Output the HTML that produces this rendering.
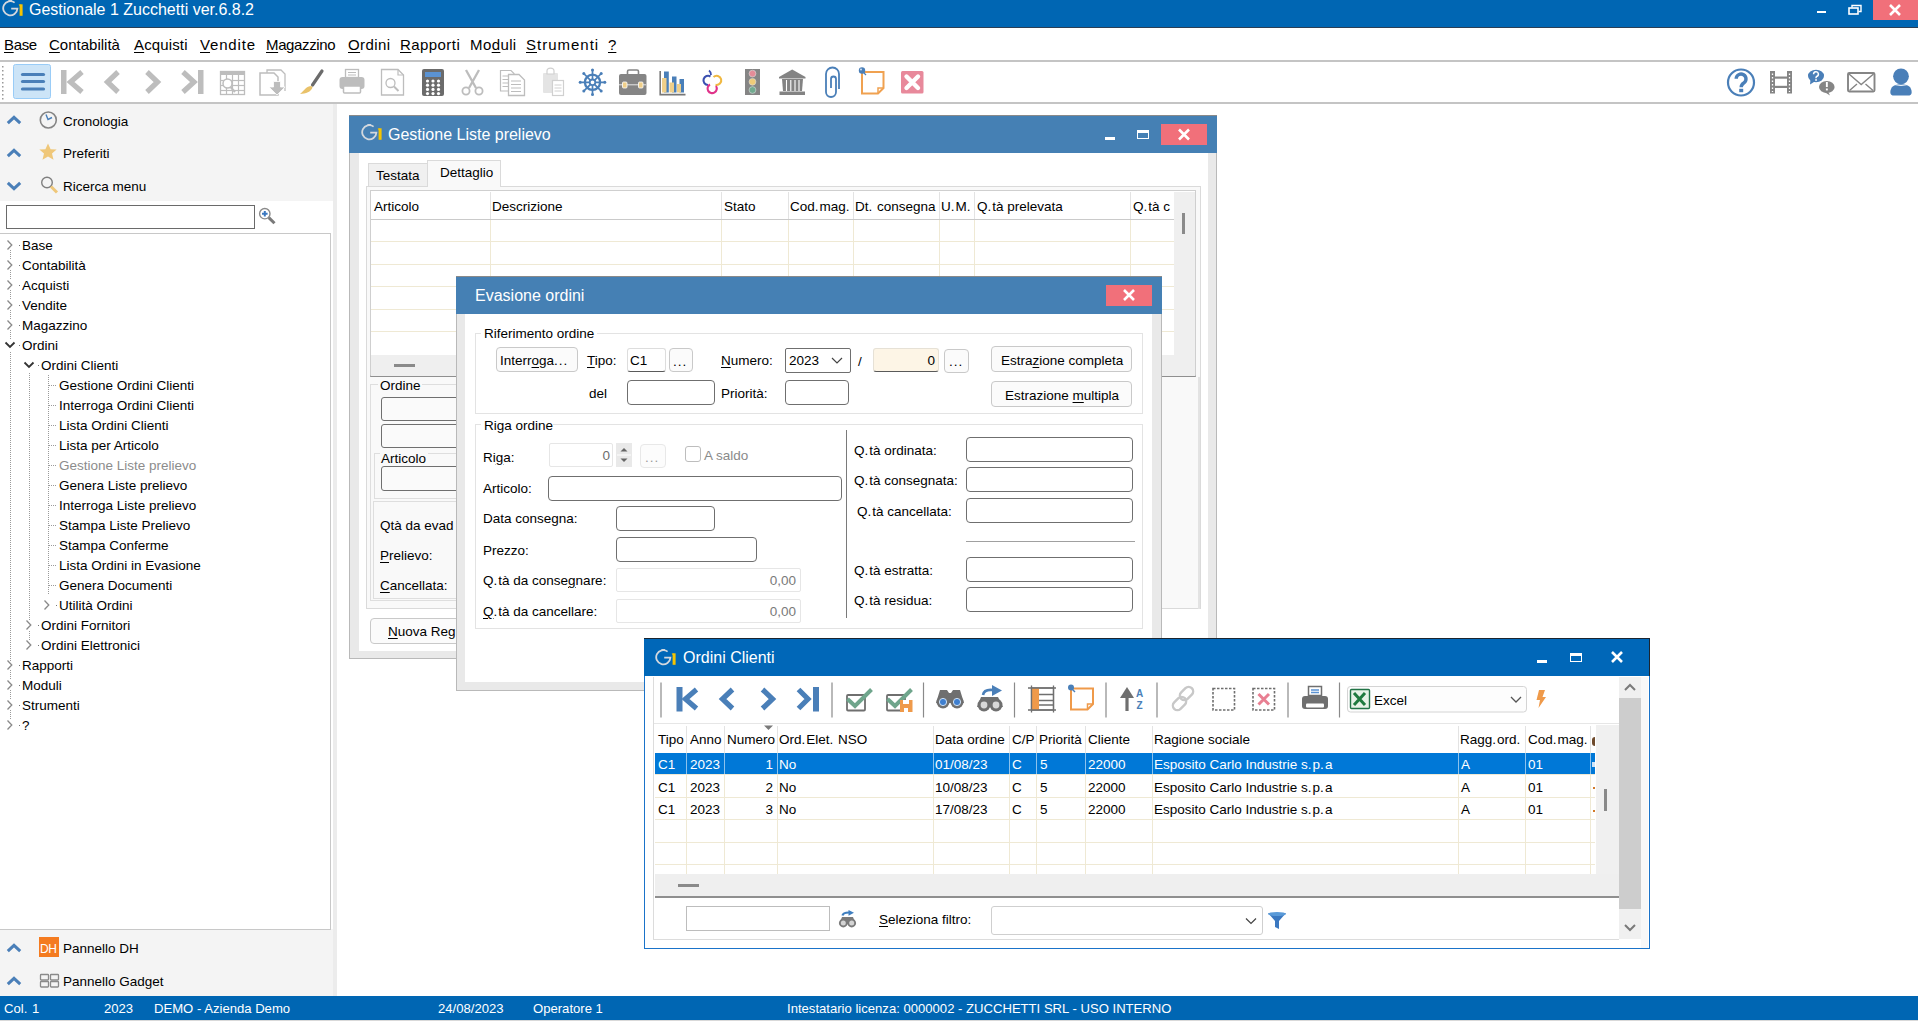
<!DOCTYPE html>
<html><head><meta charset="utf-8"><style>
html,body{margin:0;padding:0;width:1918px;height:1021px;overflow:hidden;background:#fff;}
body{position:relative;font-family:"Liberation Sans",sans-serif;}
body>div,body>svg{position:absolute;}
.t{position:absolute;white-space:nowrap;font-family:"Liberation Sans",sans-serif;}
u{text-decoration:underline;text-underline-offset:2px;text-decoration-thickness:1px;}
</style></head><body>
<div style="left:0px;top:0px;width:1918px;height:27px;background:#0066b3"></div>
<div style="left:0px;top:27px;width:1918px;height:1px;background:#2b3f55"></div>
<svg style="position:absolute;left:0px;top:0px" width="24" height="20" viewBox="0 0 24 20"><path d="M14.6 2.6 A7.1 7.1 0 1 0 17.4 8.7 L11.2 8.7" fill="none" stroke="#d3d8de" stroke-width="1.8"/><path d="M8.5 0.6H12" stroke="#d5dbe2" stroke-width="1"/><rect x="19.6" y="4.3" width="3" height="11.5" fill="#f5c400"/><path d="M18.6 4.8L20.5 4.3V6.6Z" fill="#f5c400"/></svg>
<div class="t" style="left:29px;top:2.0600000000000005px;font-size:16px;line-height:16px;color:#fff;">Gestionale 1 Zucchetti ver.6.8.2</div>
<div style="left:1817px;top:11px;width:9px;height:2px;background:#fff"></div>
<svg style="position:absolute;left:1848px;top:4px" width="16" height="12" viewBox="0 0 16 12"><rect x="1" y="4" width="9" height="6" fill="none" stroke="#fff" stroke-width="1.6"/><path d="M4 3.5V1.5h9v6h-2.5" fill="none" stroke="#fff" stroke-width="1.4"/></svg>
<div style="left:1873px;top:0px;width:45px;height:20px;background:#f1707a"></div>
<svg style="position:absolute;left:1884px;top:2px" width="22" height="16" viewBox="0 0 22 16"><path d="M6 3L16 13M16 3L6 13" stroke="#fff" stroke-width="2.6"/></svg>
<div class="t" style="left:4px;top:37.3px;font-size:15px;line-height:15px;color:#000;letter-spacing:-0.33px"><u>B</u>ase</div>
<div class="t" style="left:49px;top:37.3px;font-size:15px;line-height:15px;color:#000;letter-spacing:0px"><u>C</u>ontabilità</div>
<div class="t" style="left:134px;top:37.3px;font-size:15px;line-height:15px;color:#000;letter-spacing:0.14px"><u>A</u>cquisti</div>
<div class="t" style="left:200px;top:37.3px;font-size:15px;line-height:15px;color:#000;letter-spacing:0.83px"><u>V</u>endite</div>
<div class="t" style="left:266px;top:37.3px;font-size:15px;line-height:15px;color:#000;letter-spacing:-0.38px"><u>M</u>agazzino</div>
<div class="t" style="left:348px;top:37.3px;font-size:15px;line-height:15px;color:#000;letter-spacing:0.4px"><u>O</u>rdini</div>
<div class="t" style="left:400px;top:37.3px;font-size:15px;line-height:15px;color:#000;letter-spacing:0.43px"><u>R</u>apporti</div>
<div class="t" style="left:470px;top:37.3px;font-size:15px;line-height:15px;color:#000;letter-spacing:0.4px">Mo<u>d</u>uli</div>
<div class="t" style="left:526px;top:37.3px;font-size:15px;line-height:15px;color:#000;letter-spacing:1.0px"><u>S</u>trumenti</div>
<div class="t" style="left:608px;top:37.3px;font-size:15px;line-height:15px;color:#000;letter-spacing:0px"><u>?</u></div>
<div style="left:0px;top:60px;width:1918px;height:2px;background:#c4c4c4"></div>
<div style="left:0px;top:102px;width:1918px;height:2px;background:#c4c4c4"></div>
<div style="left:0px;top:996px;width:1918px;height:24px;background:#0066b3"></div>
<div style="left:0px;top:1020px;width:1918px;height:1px;background:#d9d9d9"></div>
<div class="t" style="left:4px;top:1001.91px;font-size:13.1px;line-height:13.1px;color:#fff;">Col<span style="letter-spacing:1px">.</span> 1</div>
<div class="t" style="left:104px;top:1001.91px;font-size:13.1px;line-height:13.1px;color:#fff;">2023</div>
<div class="t" style="left:154px;top:1001.91px;font-size:13.1px;line-height:13.1px;color:#fff;">DEMO - Azienda Demo</div>
<div class="t" style="left:438px;top:1001.91px;font-size:13.1px;line-height:13.1px;color:#fff;">24/08/2023</div>
<div class="t" style="left:533px;top:1001.91px;font-size:13.1px;line-height:13.1px;color:#fff;">Operatore 1</div>
<div class="t" style="left:787px;top:1001.91px;font-size:13.1px;line-height:13.1px;color:#fff;">Intestatario licenza: 0000002 - ZUCCHETTI SRL - USO INTERNO</div>
<div style="left:0px;top:104px;width:333px;height:97px;background:#f4f4f4"></div>
<div style="left:0px;top:929px;width:333px;height:67px;background:#f4f4f4"></div>
<div style="left:333px;top:104px;width:4px;height:892px;background:#ececec"></div>
<svg style="position:absolute;left:6px;top:115px" width="16" height="10" viewBox="0 0 16 10"><path d="M1.8 8.2L8 2.3L14.2 8.2" fill="none" stroke="#4a7fb8" stroke-width="3"/></svg>
<svg style="position:absolute;left:6px;top:148px" width="16" height="10" viewBox="0 0 16 10"><path d="M1.8 8.2L8 2.3L14.2 8.2" fill="none" stroke="#4a7fb8" stroke-width="3"/></svg>
<svg style="position:absolute;left:6px;top:181px" width="16" height="10" viewBox="0 0 16 10"><path d="M1.8 1.8L8 7.7L14.2 1.8" fill="none" stroke="#4a7fb8" stroke-width="3"/></svg>
<svg style="position:absolute;left:38px;top:110px" width="20" height="20" viewBox="0 0 20 20"><circle cx="10.3" cy="10" r="8" fill="none" stroke="#858585" stroke-width="1.6"/><path d="M8 4.5L10 9.5L14 7.5" fill="none" stroke="#4a7fb8" stroke-width="1.4"/></svg>
<svg style="position:absolute;left:38px;top:142px" width="20" height="20" viewBox="0 0 20 20"><path d="M10 1.5L12.6 7.2L18.6 7.6L14 11.6L15.5 17.8L10 14.5L4.5 17.8L6 11.6L1.4 7.6L7.4 7.2Z" fill="#efc779"/></svg>
<svg style="position:absolute;left:38px;top:175px" width="22" height="22" viewBox="0 0 22 22"><circle cx="9" cy="7.5" r="5.3" fill="none" stroke="#7f7f7f" stroke-width="1.4"/><path d="M13 11.5L19 17.5" stroke="#efc779" stroke-width="3"/></svg>
<div class="t" style="left:63px;top:114.57px;font-size:13.5px;line-height:13.5px;color:#000;">Cronologia</div>
<div class="t" style="left:63px;top:146.57px;font-size:13.5px;line-height:13.5px;color:#000;">Preferiti</div>
<div class="t" style="left:63px;top:179.57px;font-size:13.5px;line-height:13.5px;color:#000;">Ricerca menu</div>
<div style="left:6px;top:205px;width:249px;height:24px;background:#fff;border:1px solid #6a6a6a;box-sizing:border-box"></div>
<svg style="position:absolute;left:258px;top:206px" width="22" height="22" viewBox="0 0 22 22"><circle cx="6.8" cy="7.7" r="5.2" fill="#fff" stroke="#8a8a8a" stroke-width="1.4"/><path d="M4 7.7h5.6M6.8 4.9v5.6" stroke="#3b78c0" stroke-width="2"/><path d="M10.8 11.6L16.5 17.3" stroke="#7a7a7a" stroke-width="3"/></svg>
<div style="left:0px;top:233px;width:331px;height:697px;background:#fff;border:1px solid #c8c8c8;border-left:none;box-sizing:border-box"></div>
<div class="t" style="left:22px;top:238.57px;font-size:13.5px;line-height:13.5px;color:#000;">Base</div>
<div class="t" style="left:22px;top:258.57px;font-size:13.5px;line-height:13.5px;color:#000;">Contabilità</div>
<div class="t" style="left:22px;top:278.57px;font-size:13.5px;line-height:13.5px;color:#000;">Acquisti</div>
<div class="t" style="left:22px;top:298.57px;font-size:13.5px;line-height:13.5px;color:#000;">Vendite</div>
<div class="t" style="left:22px;top:318.57px;font-size:13.5px;line-height:13.5px;color:#000;">Magazzino</div>
<div class="t" style="left:22px;top:338.57px;font-size:13.5px;line-height:13.5px;color:#000;">Ordini</div>
<div class="t" style="left:41px;top:358.57px;font-size:13.5px;line-height:13.5px;color:#000;">Ordini Clienti</div>
<div class="t" style="left:59px;top:378.57px;font-size:13.5px;line-height:13.5px;color:#000;">Gestione Ordini Clienti</div>
<div class="t" style="left:59px;top:398.57px;font-size:13.5px;line-height:13.5px;color:#000;">Interroga Ordini Clienti</div>
<div class="t" style="left:59px;top:418.57px;font-size:13.5px;line-height:13.5px;color:#000;">Lista Ordini Clienti</div>
<div class="t" style="left:59px;top:438.57px;font-size:13.5px;line-height:13.5px;color:#000;">Lista per Articolo</div>
<div class="t" style="left:59px;top:458.57px;font-size:13.5px;line-height:13.5px;color:#8c8c8c;">Gestione Liste prelievo</div>
<div class="t" style="left:59px;top:478.57px;font-size:13.5px;line-height:13.5px;color:#000;">Genera Liste prelievo</div>
<div class="t" style="left:59px;top:498.57px;font-size:13.5px;line-height:13.5px;color:#000;">Interroga Liste prelievo</div>
<div class="t" style="left:59px;top:518.57px;font-size:13.5px;line-height:13.5px;color:#000;">Stampa Liste Prelievo</div>
<div class="t" style="left:59px;top:538.57px;font-size:13.5px;line-height:13.5px;color:#000;">Stampa Conferme</div>
<div class="t" style="left:59px;top:558.57px;font-size:13.5px;line-height:13.5px;color:#000;">Lista Ordini in Evasione</div>
<div class="t" style="left:59px;top:578.57px;font-size:13.5px;line-height:13.5px;color:#000;">Genera Documenti</div>
<div class="t" style="left:59px;top:598.57px;font-size:13.5px;line-height:13.5px;color:#000;">Utilità Ordini</div>
<div class="t" style="left:41px;top:618.57px;font-size:13.5px;line-height:13.5px;color:#000;">Ordini Fornitori</div>
<div class="t" style="left:41px;top:638.57px;font-size:13.5px;line-height:13.5px;color:#000;">Ordini Elettronici</div>
<div class="t" style="left:22px;top:658.57px;font-size:13.5px;line-height:13.5px;color:#000;">Rapporti</div>
<div class="t" style="left:22px;top:678.57px;font-size:13.5px;line-height:13.5px;color:#000;">Moduli</div>
<div class="t" style="left:22px;top:698.57px;font-size:13.5px;line-height:13.5px;color:#000;">Strumenti</div>
<div class="t" style="left:22px;top:718.57px;font-size:13.5px;line-height:13.5px;color:#000;">?</div>
<svg style="position:absolute;left:0px;top:0px" width="80" height="760" viewBox="0 0 80 760"><path d="M7.5 240.5L11.8 245L7.5 249.5" fill="none" stroke="#8a8a8a" stroke-width="1.3"/><rect x="19" y="245" width="1" height="1" fill="#777"/><path d="M7.5 260.5L11.8 265L7.5 269.5" fill="none" stroke="#8a8a8a" stroke-width="1.3"/><rect x="19" y="265" width="1" height="1" fill="#777"/><path d="M7.5 280.5L11.8 285L7.5 289.5" fill="none" stroke="#8a8a8a" stroke-width="1.3"/><rect x="19" y="285" width="1" height="1" fill="#777"/><path d="M7.5 300.5L11.8 305L7.5 309.5" fill="none" stroke="#8a8a8a" stroke-width="1.3"/><rect x="19" y="305" width="1" height="1" fill="#777"/><path d="M7.5 320.5L11.8 325L7.5 329.5" fill="none" stroke="#8a8a8a" stroke-width="1.3"/><rect x="19" y="325" width="1" height="1" fill="#777"/><path d="M5.5 342.5L10 347L14.5 342.5" fill="none" stroke="#333" stroke-width="1.8"/><rect x="19" y="345" width="1" height="1" fill="#777"/><path d="M24.5 362.5L29 367L33.5 362.5" fill="none" stroke="#333" stroke-width="1.8"/><rect x="38" y="365" width="1" height="1" fill="#777"/><path d="M49 385.5H57" stroke="#9a9a9a" stroke-width="1" stroke-dasharray="1 1"/><path d="M49 405.5H57" stroke="#9a9a9a" stroke-width="1" stroke-dasharray="1 1"/><path d="M49 425.5H57" stroke="#9a9a9a" stroke-width="1" stroke-dasharray="1 1"/><path d="M49 445.5H57" stroke="#9a9a9a" stroke-width="1" stroke-dasharray="1 1"/><path d="M49 465.5H57" stroke="#9a9a9a" stroke-width="1" stroke-dasharray="1 1"/><path d="M49 485.5H57" stroke="#9a9a9a" stroke-width="1" stroke-dasharray="1 1"/><path d="M49 505.5H57" stroke="#9a9a9a" stroke-width="1" stroke-dasharray="1 1"/><path d="M49 525.5H57" stroke="#9a9a9a" stroke-width="1" stroke-dasharray="1 1"/><path d="M49 545.5H57" stroke="#9a9a9a" stroke-width="1" stroke-dasharray="1 1"/><path d="M49 565.5H57" stroke="#9a9a9a" stroke-width="1" stroke-dasharray="1 1"/><path d="M49 585.5H57" stroke="#9a9a9a" stroke-width="1" stroke-dasharray="1 1"/><path d="M44.5 600.5L48.8 605L44.5 609.5" fill="none" stroke="#8a8a8a" stroke-width="1.3"/><rect x="56" y="605" width="1" height="1" fill="#777"/><path d="M26.5 620.5L30.8 625L26.5 629.5" fill="none" stroke="#8a8a8a" stroke-width="1.3"/><rect x="38" y="625" width="1" height="1" fill="#777"/><path d="M26.5 640.5L30.8 645L26.5 649.5" fill="none" stroke="#8a8a8a" stroke-width="1.3"/><rect x="38" y="645" width="1" height="1" fill="#777"/><path d="M7.5 660.5L11.8 665L7.5 669.5" fill="none" stroke="#8a8a8a" stroke-width="1.3"/><rect x="19" y="665" width="1" height="1" fill="#777"/><path d="M7.5 680.5L11.8 685L7.5 689.5" fill="none" stroke="#8a8a8a" stroke-width="1.3"/><rect x="19" y="685" width="1" height="1" fill="#777"/><path d="M7.5 700.5L11.8 705L7.5 709.5" fill="none" stroke="#8a8a8a" stroke-width="1.3"/><rect x="19" y="705" width="1" height="1" fill="#777"/><path d="M7.5 720.5L11.8 725L7.5 729.5" fill="none" stroke="#8a8a8a" stroke-width="1.3"/><rect x="19" y="725" width="1" height="1" fill="#777"/><path d="M10.5 250V260" stroke="#9a9a9a" stroke-width="1" stroke-dasharray="1 1"/><path d="M10.5 270V280" stroke="#9a9a9a" stroke-width="1" stroke-dasharray="1 1"/><path d="M10.5 290V300" stroke="#9a9a9a" stroke-width="1" stroke-dasharray="1 1"/><path d="M10.5 310V320" stroke="#9a9a9a" stroke-width="1" stroke-dasharray="1 1"/><path d="M10.5 330V340" stroke="#9a9a9a" stroke-width="1" stroke-dasharray="1 1"/><path d="M10.5 352V661" stroke="#9a9a9a" stroke-width="1" stroke-dasharray="1 1"/><path d="M10.5 670V680" stroke="#9a9a9a" stroke-width="1" stroke-dasharray="1 1"/><path d="M10.5 690V700" stroke="#9a9a9a" stroke-width="1" stroke-dasharray="1 1"/><path d="M10.5 710V720" stroke="#9a9a9a" stroke-width="1" stroke-dasharray="1 1"/><path d="M29.5 373V621" stroke="#9a9a9a" stroke-width="1" stroke-dasharray="1 1"/><path d="M29.5 631V640" stroke="#9a9a9a" stroke-width="1" stroke-dasharray="1 1"/><path d="M48.5 375V594" stroke="#9a9a9a" stroke-width="1" stroke-dasharray="1 1"/></svg>
<svg style="position:absolute;left:6px;top:943px" width="16" height="10" viewBox="0 0 16 10"><path d="M1.8 8.2L8 2.3L14.2 8.2" fill="none" stroke="#4a7fb8" stroke-width="3"/></svg>
<svg style="position:absolute;left:6px;top:976px" width="16" height="10" viewBox="0 0 16 10"><path d="M1.8 8.2L8 2.3L14.2 8.2" fill="none" stroke="#4a7fb8" stroke-width="3"/></svg>
<div style="left:39px;top:937px;width:20px;height:20px;background:#f47b20"></div>
<div class="t" style="left:40px;top:942.84px;font-size:12px;line-height:12px;color:#fff;letter-spacing:-0.5px">DH</div>
<svg style="position:absolute;left:39px;top:970px" width="22" height="20" viewBox="0 0 22 20"><g fill="none" stroke="#8a8a8a" stroke-width="1.3"><rect x="1.5" y="4.5" width="8" height="5.5" rx=".8"/><rect x="11.5" y="4.5" width="8" height="5.5" rx=".8"/><rect x="1.5" y="11.5" width="8" height="5.5" rx=".8"/><rect x="11.5" y="11.5" width="8" height="5.5" rx=".8"/></g></svg>
<div class="t" style="left:63px;top:941.57px;font-size:13.5px;line-height:13.5px;color:#000;">Pannello DH</div>
<div class="t" style="left:63px;top:974.57px;font-size:13.5px;line-height:13.5px;color:#000;">Pannello Gadget</div>
<svg style="position:absolute;left:0;top:0" width="1918" height="110"><rect x="2" y="66" width="1.5" height="1.5" fill="#999"/><rect x="2" y="70" width="1.5" height="1.5" fill="#999"/><rect x="2" y="74" width="1.5" height="1.5" fill="#999"/><rect x="2" y="78" width="1.5" height="1.5" fill="#999"/><rect x="2" y="82" width="1.5" height="1.5" fill="#999"/><rect x="2" y="86" width="1.5" height="1.5" fill="#999"/><rect x="2" y="90" width="1.5" height="1.5" fill="#999"/><rect x="2" y="94" width="1.5" height="1.5" fill="#999"/><rect x="2" y="98" width="1.5" height="1.5" fill="#999"/><rect x="13.5" y="64.5" width="37" height="34" rx="2" fill="#cce4f7" stroke="#99ccf7" stroke-width="1"/><path d="M22.5 74.5H43.5" stroke="#4a7fb8" stroke-width="3.2" stroke-linecap="round"/><path d="M22.5 81.5H43.5" stroke="#4a7fb8" stroke-width="3.2" stroke-linecap="round"/><path d="M22.5 89H43.5" stroke="#4a7fb8" stroke-width="3.2" stroke-linecap="round"/><rect x="61" y="70" width="5.5" height="24" fill="#bdbdbd"/><path d="M82 72L70.5 82L82 92" fill="none" stroke="#bdbdbd" stroke-width="5.2"/><path d="M118 72L107.5 82L118 92" fill="none" stroke="#bdbdbd" stroke-width="5.2"/><path d="M147 72L157.5 82L147 92" fill="none" stroke="#bdbdbd" stroke-width="5.2"/><path d="M183 72L194 82L183 92" fill="none" stroke="#bdbdbd" stroke-width="5.2"/><rect x="198" y="70" width="5.5" height="24" fill="#bdbdbd"/><rect x="220.5" y="71.5" width="24" height="23" fill="none" stroke="#bdbdbd" stroke-width="1.3"/><rect x="220" y="71" width="25" height="4" fill="#bdbdbd"/><path d="M226.5 75V95" stroke="#bdbdbd" stroke-width="1.2"/><path d="M232.5 75V95" stroke="#bdbdbd" stroke-width="1.2"/><path d="M238.5 75V95" stroke="#bdbdbd" stroke-width="1.2"/><path d="M220 80.5H245" stroke="#bdbdbd" stroke-width="1.2"/><path d="M220 85.5H245" stroke="#bdbdbd" stroke-width="1.2"/><path d="M220 90.5H245" stroke="#bdbdbd" stroke-width="1.2"/><circle cx="227.5" cy="83.5" r="4.5" fill="#fff" stroke="#bdbdbd" stroke-width="1.5"/><path d="M230.5 87L235 92" stroke="#bdbdbd" stroke-width="2"/><path d="M267 74V70H281L285 74V91" fill="none" stroke="#bdbdbd" stroke-width="1.3"/><path d="M260 73H274L278 77V95H260Z" fill="#fff" stroke="#bdbdbd" stroke-width="1.5"/><path d="M273.5 81.5H280.5V87H285L277 95L269 87H273.5Z" fill="#bdbdbd" stroke="#fff" stroke-width=".8"/><path d="M322 71L312.5 85" stroke="#6b6b6b" stroke-width="3.2" stroke-linecap="round"/><path d="M311.5 86C306 86 305 90 300 94C306 93.5 311 92 312.5 87.5Z" fill="#e9c26a"/><rect x="345.5" y="69.5" width="13" height="8" fill="#fff" stroke="#bdbdbd" stroke-width="1.3"/><path d="M348 72.5H356M348 75H356" stroke="#bdbdbd" stroke-width="1"/><rect x="339.5" y="77" width="25" height="12" rx="3" fill="#bdbdbd"/><rect x="343.5" y="86" width="17" height="7" rx="1" fill="#fff" stroke="#bdbdbd" stroke-width="1.5"/><path d="M381.5 69.5H398L403.5 75V95H381.5Z" fill="#fff" stroke="#bdbdbd" stroke-width="1.3"/><path d="M398 69.5V75H403.5" fill="none" stroke="#bdbdbd" stroke-width="1.2"/><circle cx="390.5" cy="83" r="4.5" fill="none" stroke="#bdbdbd" stroke-width="1.3"/><path d="M394 86.5L398.5 91" stroke="#bdbdbd" stroke-width="2"/><rect x="422" y="69" width="22" height="27" rx="2" fill="#6b6b6b"/><rect x="425" y="72" width="16" height="5" fill="#5b93d3"/><circle cx="427.5" cy="81.0" r="1.6" fill="#fff"/><circle cx="433.0" cy="81.0" r="1.6" fill="#fff"/><circle cx="438.5" cy="81.0" r="1.6" fill="#fff"/><circle cx="427.5" cy="85.2" r="1.6" fill="#fff"/><circle cx="433.0" cy="85.2" r="1.6" fill="#fff"/><circle cx="438.5" cy="85.2" r="1.6" fill="#fff"/><circle cx="427.5" cy="89.4" r="1.6" fill="#fff"/><circle cx="433.0" cy="89.4" r="1.6" fill="#fff"/><circle cx="438.5" cy="89.4" r="1.6" fill="#fff"/><circle cx="427.5" cy="93.6" r="1.6" fill="#fff"/><circle cx="433.0" cy="93.6" r="1.6" fill="#fff"/><circle cx="438.5" cy="93.6" r="1.6" fill="#fff"/><path d="M466 70L476 88M479 70L469 88" stroke="#bdbdbd" stroke-width="2.3"/><circle cx="466" cy="91" r="3.6" fill="#fff" stroke="#bdbdbd" stroke-width="1.8"/><circle cx="479" cy="91" r="3.6" fill="#fff" stroke="#bdbdbd" stroke-width="1.8"/><path d="M500.5 70.5H511L514 73.5V91H500.5Z" fill="#fff" stroke="#bdbdbd" stroke-width="1.2"/><path d="M502.5 76H511M502.5 79.5H511M502.5 83H511M502.5 86.5H511" stroke="#bdbdbd" stroke-width="1"/><path d="M508.5 74.5H519L524.5 80V95.5H508.5Z" fill="#fff" stroke="#bdbdbd" stroke-width="1.3"/><path d="M511 81H521M511 84.5H521M511 88H521M511 91.5H521" stroke="#bdbdbd" stroke-width="1.1"/><rect x="543" y="73" width="15" height="20" rx="1" fill="#e4e4e4"/><path d="M547 74V71A3 2.5 0 0 1 554 71V74Z" fill="#fff" stroke="#d0d0d0" stroke-width="1.2"/><rect x="552.5" y="80.5" width="11" height="15" fill="#fff" stroke="#d0d0d0" stroke-width="1.2"/><path d="M554.5 85H561.5M554.5 88H561.5M554.5 91H561.5" stroke="#d0d0d0" stroke-width="1"/><circle cx="604.80" cy="82.30" r="1.5" fill="#4a7fb8"/><circle cx="601.20" cy="91.00" r="1.5" fill="#4a7fb8"/><circle cx="592.50" cy="94.60" r="1.5" fill="#4a7fb8"/><circle cx="583.80" cy="91.00" r="1.5" fill="#4a7fb8"/><circle cx="580.20" cy="82.30" r="1.5" fill="#4a7fb8"/><circle cx="583.80" cy="73.60" r="1.5" fill="#4a7fb8"/><circle cx="592.50" cy="70.00" r="1.5" fill="#4a7fb8"/><circle cx="601.20" cy="73.60" r="1.5" fill="#4a7fb8"/><path d="M595.30 82.30L605.30 82.30M594.48 84.28L601.55 91.35M592.50 85.10L592.50 95.10M590.52 84.28L583.45 91.35M589.70 82.30L579.70 82.30M590.52 80.32L583.45 73.25M592.50 79.50L592.50 69.50M594.48 80.32L601.55 73.25" stroke="#4a7fb8" stroke-width="1.7"/><circle cx="592.5" cy="82.3" r="7.6" fill="none" stroke="#4a7fb8" stroke-width="2.3"/><circle cx="592.5" cy="82.3" r="2.8" fill="#fff" stroke="#4a7fb8" stroke-width="1.8"/><path d="M627.5 74V71.5A1.5 1.5 0 0 1 629 70H637A1.5 1.5 0 0 1 638.5 71.5V74" fill="none" stroke="#858585" stroke-width="1.6"/><rect x="619" y="74" width="27.5" height="21" rx="2" fill="#858585"/><path d="M619 84.8H646" stroke="#e6e6e6" stroke-width="1"/><rect x="622.5" y="82" width="4.5" height="6" rx="1" fill="#efcf8a" stroke="#fff" stroke-width=".8"/><rect x="638.5" y="82" width="4.5" height="6" rx="1" fill="#efcf8a" stroke="#fff" stroke-width=".8"/><path d="M660.2 71V94.6H685.5" fill="none" stroke="#777" stroke-width="1.6"/><rect x="664" y="71.5" width="4.8" height="21" fill="#4a7fb8"/><rect x="672" y="76.5" width="4.5" height="16" fill="#4a7fb8"/><rect x="679.5" y="79" width="4.5" height="13.5" fill="#4a7fb8"/><rect x="662" y="78" width="4.5" height="14.5" fill="#efcf8a"/><rect x="669.5" y="82.5" width="4.5" height="10" fill="#efcf8a"/><rect x="677" y="84" width="4" height="8.5" fill="#efcf8a"/><path d="M710.5 76.5A4.6 4.6 0 1 0 708 85" fill="none" stroke="#3b4fb0" stroke-width="2.1"/><path d="M709 70.5Q711 72 711 75" fill="none" stroke="#3b4fb0" stroke-width="1.8"/><path d="M713.5 77A4.6 4.6 0 1 1 715.5 84.8" fill="none" stroke="#f0b840" stroke-width="2.1"/><path d="M710 84.5A4.6 4.6 0 1 0 716 86" fill="none" stroke="#e0338a" stroke-width="2.1"/><rect x="745" y="69" width="15" height="26" fill="#858585"/><circle cx="752.5" cy="73.6" r="3.4" fill="#e58c98" stroke="#ddd" stroke-width=".6"/><circle cx="752.5" cy="81.8" r="3.4" fill="#efcb78" stroke="#ddd" stroke-width=".6"/><circle cx="752.5" cy="90" r="3.4" fill="#72ab90" stroke="#ddd" stroke-width=".6"/><path d="M779 77L792.2 69.5L805.5 77V78.5H779Z" fill="#838383"/><path d="M782 79H803L802 91H783Z" fill="#838383"/><path d="M786.5 80V91M790.8 80V91M795 80V91M799 80V91" stroke="#fff" stroke-width="1.1"/><rect x="779.5" y="91.5" width="25.5" height="3.5" fill="#838383"/><path d="M839 89V74A6.5 6.5 0 0 0 826 74V92A5 5 0 0 0 836 92V79A2.5 2.5 0 0 0 831 79V88" fill="none" stroke="#4a7fb8" stroke-width="1.8"/><path d="M862 72H883.5V88L878 93.5H862Z" fill="none" stroke="#f0a150" stroke-width="2"/><path d="M878 93.5V88H883.5" fill="none" stroke="#f0a150" stroke-width="1.5"/><path d="M861 70L866 75" stroke="#4a7fb8" stroke-width="1.3"/><circle cx="862" cy="70.5" r="3.2" fill="#4a7fb8"/><circle cx="861" cy="69.5" r="1" fill="#cfe0f2"/><rect x="901" y="71" width="22.5" height="22.5" rx="1.5" fill="#e8899b"/><path d="M906.5 76.5L918 88M918 76.5L906.5 88" stroke="#fff" stroke-width="4.4" stroke-linecap="round"/><circle cx="1741" cy="82.5" r="13" fill="none" stroke="#4a7fb8" stroke-width="2.2"/><path d="M1736.2 78.8A4.9 4.9 0 1 1 1743.5 83.2C1741.8 84.3 1741.2 85.2 1741.2 87.3" fill="none" stroke="#4a7fb8" stroke-width="3.4"/><rect x="1739.2" y="88.8" width="4" height="3.4" fill="#4a7fb8"/><rect x="1770" y="71" width="5" height="22.5" fill="#858585"/><rect x="1787" y="71" width="5" height="22.5" fill="#858585"/><rect x="1775" y="76.5" width="12" height="2.2" fill="#858585"/><rect x="1775" y="85.8" width="12" height="2.2" fill="#858585"/><path d="M1772.5 73.5V92" stroke="#fff" stroke-width="1.3" stroke-dasharray="1.6 1.9"/><path d="M1789.5 73.5V92" stroke="#fff" stroke-width="1.3" stroke-dasharray="1.6 1.9"/><ellipse cx="1816" cy="76" rx="8" ry="6.2" fill="#4a7fb8"/><path d="M1810.5 80L1810 84.5L1815.5 81Z" fill="#4a7fb8"/><path d="M1813.6 74.2A2.4 2.4 0 1 1 1816.6 76.4C1816 76.8 1816 77.3 1816 78.2" fill="none" stroke="#fff" stroke-width="1.5"/><rect x="1815.2" y="79.2" width="1.7" height="1.6" fill="#fff"/><ellipse cx="1826.8" cy="87" rx="7.8" ry="6" fill="#858585"/><path d="M1828 91.5L1830 95.5L1824.5 92Z" fill="#858585"/><rect x="1825.9" y="82" width="1.9" height="5" fill="#fff"/><rect x="1825.9" y="88.5" width="1.9" height="1.9" fill="#fff"/><rect x="1848" y="73" width="26.5" height="18.5" rx="1.2" fill="none" stroke="#858585" stroke-width="1.9"/><path d="M1849 74L1861.2 84.5L1873.5 74M1849.5 90.5L1857 84M1873 90.5L1865.5 84" fill="none" stroke="#858585" stroke-width="1.4"/><circle cx="1901" cy="76.3" r="7.9" fill="#4a7fb8"/><path d="M1892.5 95.5C1890.5 95 1890 93 1890.5 90.5C1891.5 86 1895 84.3 1901 84.3C1907 84.3 1910.5 86 1911.5 90.5C1912 93 1911.5 95 1909.5 95.5Z" fill="#4a7fb8"/><path d="M1894.5 84.6Q1901 86.6 1907.5 84.6" stroke="#fff" stroke-width=".9" fill="none"/></svg>
<div style="left:349px;top:115px;width:868px;height:544px;background:#e9e9e9;border:1px solid #b9b9b9;box-sizing:border-box"></div>
<div style="left:349px;top:115px;width:868px;height:38px;background:#4580b4;border-top:1px solid #8a8a8a;box-sizing:border-box"></div>
<div style="left:359px;top:153px;width:849px;height:498px;background:#fff"></div>
<svg style="position:absolute;left:358.6px;top:124.1px" width="24" height="20" viewBox="0 0 24 20"><path d="M14.6 2.6 A7.1 7.1 0 1 0 17.4 8.7 L11.2 8.7" fill="none" stroke="#d3d8de" stroke-width="1.8"/><path d="M8.5 0.6H12" stroke="#d5dbe2" stroke-width="1"/><rect x="19.6" y="4.3" width="3" height="11.5" fill="#f5c400"/><path d="M18.6 4.8L20.5 4.3V6.6Z" fill="#f5c400"/></svg>
<div class="t" style="left:388px;top:127.46000000000001px;font-size:16px;line-height:16px;color:#fff;">Gestione Liste prelievo</div>
<div style="left:1105px;top:137px;width:10px;height:3px;background:#fff"></div>
<div style="left:1137px;top:130px;width:12px;height:9px;border:1.5px solid #fff;border-top-width:3px;box-sizing:border-box"></div>
<div style="left:1161px;top:124px;width:46px;height:21px;background:#f1707a"></div>
<svg style="position:absolute;left:1174px;top:127px" width="20" height="15" viewBox="0 0 20 15"><path d="M5 2.5L15 12.5M15 2.5L5 12.5" stroke="#fff" stroke-width="2.6"/></svg>
<div style="left:368px;top:163px;width:60px;height:24px;background:#f0f0f0;border:1px solid #dadada;border-bottom:none;box-sizing:border-box"></div>
<div class="t" style="left:376px;top:168.57px;font-size:13.5px;line-height:13.5px;color:#000;">Testata</div>
<div style="left:427px;top:160px;width:74px;height:27px;background:#f9f9f9;border:1px solid #dadada;border-bottom:none;box-sizing:border-box"></div>
<div class="t" style="left:440px;top:165.57px;font-size:13.5px;line-height:13.5px;color:#000;">Dettaglio</div>
<div style="left:366px;top:186px;width:835px;height:423px;background:#f9f9f9;border:1px solid #dadada;box-sizing:border-box"></div>
<div style="left:428px;top:186px;width:72px;height:1px;background:#f9f9f9"></div>
<div style="left:370px;top:190px;width:826px;height:187px;background:#fff;border:1px solid #cfcfcf;border-bottom:2px solid #8f8f8f;box-sizing:border-box"></div>
<div style="left:371px;top:219px;width:803px;height:1px;background:#cacaca"></div>
<svg style="position:absolute;left:0px;top:0px" width="1200" height="380" viewBox="0 0 1200 380"><path d="M490.5 192V219" stroke="#e3e3e3"/><path d="M490.5 220V355" stroke="#efe9d4"/><path d="M721.5 192V219" stroke="#e3e3e3"/><path d="M721.5 220V355" stroke="#efe9d4"/><path d="M788.5 192V219" stroke="#e3e3e3"/><path d="M788.5 220V355" stroke="#efe9d4"/><path d="M853.5 192V219" stroke="#e3e3e3"/><path d="M853.5 220V355" stroke="#efe9d4"/><path d="M939.5 192V219" stroke="#e3e3e3"/><path d="M939.5 220V355" stroke="#efe9d4"/><path d="M974.5 192V219" stroke="#e3e3e3"/><path d="M974.5 220V355" stroke="#efe9d4"/><path d="M1130.5 192V219" stroke="#e3e3e3"/><path d="M1130.5 220V355" stroke="#efe9d4"/><path d="M371 241.5H1174" stroke="#efe9d4"/><path d="M371 264.5H1174" stroke="#efe9d4"/><path d="M371 286.5H1174" stroke="#efe9d4"/><path d="M371 309.5H1174" stroke="#efe9d4"/><path d="M371 331.5H1174" stroke="#efe9d4"/></svg>
<div class="t" style="left:374px;top:199.57px;font-size:13.5px;line-height:13.5px;color:#000;">Articolo</div>
<div class="t" style="left:492px;top:199.57px;font-size:13.5px;line-height:13.5px;color:#000;">Descrizione</div>
<div class="t" style="left:724px;top:199.57px;font-size:13.5px;line-height:13.5px;color:#000;">Stato</div>
<div class="t" style="left:790px;top:199.57px;font-size:13.5px;line-height:13.5px;color:#000;">Cod<span style="letter-spacing:1px">.</span>mag<span style="letter-spacing:1px">.</span></div>
<div class="t" style="left:855px;top:199.57px;font-size:13.5px;line-height:13.5px;color:#000;">Dt<span style="letter-spacing:1px">.</span> consegna</div>
<div class="t" style="left:941px;top:199.57px;font-size:13.5px;line-height:13.5px;color:#000;">U<span style="letter-spacing:1px">.</span>M<span style="letter-spacing:1px">.</span></div>
<div class="t" style="left:977px;top:199.57px;font-size:13.5px;line-height:13.5px;color:#000;">Q<span style="letter-spacing:1px">.</span>tà prelevata</div>
<div class="t" style="left:1133px;top:199.57px;font-size:13.5px;line-height:13.5px;color:#000;">Q<span style="letter-spacing:1px">.</span>tà c</div>
<div style="left:1174px;top:192px;width:21px;height:184px;background:#efefef"></div>
<div style="left:1182px;top:213px;width:3px;height:21px;background:#8a8a8a"></div>
<div style="left:371px;top:355px;width:803px;height:21px;background:#efefef"></div>
<div style="left:394px;top:364px;width:21px;height:3px;background:#8a8a8a"></div>
<div style="left:1174px;top:355px;width:21px;height:21px;background:#efefef"></div>
<div style="left:370px;top:384px;width:100px;height:217px;background:#f9f9f9;border:1px solid #dedede;box-sizing:border-box"></div>
<div style="left:378px;top:380px;width:44px;height:10px;background:#f9f9f9"></div>
<div class="t" style="left:380px;top:378.57px;font-size:13.5px;line-height:13.5px;color:#000;">Ordine</div>
<div style="left:381px;top:397px;width:90px;height:24px;background:#fafafa;border:1px solid #6f6f6f;border-radius:3px;box-sizing:border-box;"></div>
<div style="left:381px;top:424px;width:90px;height:24px;background:#fafafa;border:1px solid #6f6f6f;border-radius:3px;box-sizing:border-box;"></div>
<div style="left:374px;top:453px;width:96px;height:46px;background:#f9f9f9;border:1px solid #dedede;box-sizing:border-box"></div>
<div style="left:380px;top:450px;width:48px;height:10px;background:#f9f9f9"></div>
<div class="t" style="left:381px;top:451.57px;font-size:13.5px;line-height:13.5px;color:#000;">Articolo</div>
<div style="left:381px;top:466px;width:90px;height:25px;background:#fafafa;border:1px solid #6f6f6f;border-radius:3px;box-sizing:border-box;"></div>
<div style="left:373px;top:501px;width:97px;height:98px;background:#f9f9f9;border:1px solid #dedede;box-sizing:border-box"></div>
<div class="t" style="left:380px;top:518.57px;font-size:13.5px;line-height:13.5px;color:#000;">Qtà da evad</div>
<div class="t" style="left:380px;top:548.57px;font-size:13.5px;line-height:13.5px;color:#000;"><u>P</u>relievo:</div>
<div class="t" style="left:380px;top:578.57px;font-size:13.5px;line-height:13.5px;color:#000;"><u>C</u>ancellata:</div>
<div style="left:370px;top:618px;width:100px;height:26px;background:#fbfbfb;border:1px solid #c9c9c9;border-radius:4px;box-sizing:border-box;"></div>
<div class="t" style="left:388px;top:624.57px;font-size:13.5px;line-height:13.5px;color:#000;"><u>N</u>uova Reg<span style="letter-spacing:1px">.</span></div>
<div style="left:1198px;top:377px;width:2px;height:232px;background:#e3e3e3"></div>
<div style="left:456px;top:276px;width:706px;height:415px;background:#e9e9e9;border:1px solid #b9b9b9;box-sizing:border-box"></div>
<div style="left:456px;top:276px;width:706px;height:38px;background:#4580b4;border-top:1px solid #8a8a8a;box-sizing:border-box"></div>
<div style="left:465px;top:314px;width:687px;height:368px;background:#fff"></div>
<div class="t" style="left:475px;top:287.96px;font-size:16px;line-height:16px;color:#fff;">Evasione ordini</div>
<div style="left:1106px;top:285px;width:46px;height:21px;background:#f1707a"></div>
<svg style="position:absolute;left:1119px;top:287px" width="20" height="17" viewBox="0 0 20 17"><path d="M5 3L15 13M15 3L5 13" stroke="#fff" stroke-width="2.6"/></svg>
<div style="left:475px;top:333px;width:668px;height:81px;background:#fff;border:1px solid #e3e3e3;box-sizing:border-box"></div>
<div style="left:481px;top:328px;width:116px;height:10px;background:#fff"></div>
<div class="t" style="left:484px;top:326.57px;font-size:13.5px;line-height:13.5px;color:#000;">Riferimento ordine</div>
<div style="left:496px;top:347px;width:82px;height:25px;background:#fbfbfb;border:1px solid #c9c9c9;border-radius:4px;box-sizing:border-box;"></div>
<div class="t" style="left:500px;top:353.57px;font-size:13.5px;line-height:13.5px;color:#000;">Interr<u>o</u>ga<span style="letter-spacing:1px">.</span><span style="letter-spacing:1px">.</span><span style="letter-spacing:1px">.</span></div>
<div class="t" style="left:587px;top:353.57px;font-size:13.5px;line-height:13.5px;color:#000;"><u>T</u>ipo:</div>
<div style="left:627px;top:348px;width:39px;height:24px;background:#fff;border:1px solid #dddddd;border-radius:3px;box-sizing:border-box;border-bottom:1.5px solid #5a5a5a"></div>
<div class="t" style="left:630px;top:353.57px;font-size:13.5px;line-height:13.5px;color:#000;">C1</div>
<div style="left:669px;top:348px;width:24px;height:24px;background:#fbfbfb;border:1px solid #c9c9c9;border-radius:4px;box-sizing:border-box;"></div>
<div class="t" style="left:673px;top:354.57px;font-size:13.5px;line-height:13.5px;color:#000;"><span style="letter-spacing:1px">.</span><span style="letter-spacing:1px">.</span><span style="letter-spacing:1px">.</span></div>
<div class="t" style="left:721px;top:353.57px;font-size:13.5px;line-height:13.5px;color:#000;"><u>N</u>umero:</div>
<div style="left:785px;top:348px;width:66px;height:25px;background:#fff;border:1px solid #6f6f6f;border-radius:2px;box-sizing:border-box;"></div>
<div class="t" style="left:789px;top:353.57px;font-size:13.5px;line-height:13.5px;color:#000;">2023</div>
<svg style="position:absolute;left:830px;top:353px" width="14" height="14" viewBox="0 0 14 14"><path d="M2 5L7 10L12 5" fill="none" stroke="#444" stroke-width="1.2"/></svg>
<div class="t" style="left:858px;top:354.57px;font-size:13.5px;line-height:13.5px;color:#000;">/</div>
<div style="left:873px;top:348px;width:66px;height:24px;background:#fdf5e6;border:1px solid #e6e1d6;border-radius:3px;box-sizing:border-box;border-bottom:1.5px solid #5a5a5a"></div>
<div class="t" style="left:auto;right:983px;top:353.57px;font-size:13.5px;line-height:13.5px;color:#000;">0</div>
<div style="left:944px;top:349px;width:25px;height:24px;background:#fbfbfb;border:1px solid #c9c9c9;border-radius:4px;box-sizing:border-box;"></div>
<div class="t" style="left:949px;top:354.57px;font-size:13.5px;line-height:13.5px;color:#000;"><span style="letter-spacing:1px">.</span><span style="letter-spacing:1px">.</span><span style="letter-spacing:1px">.</span></div>
<div style="left:991px;top:346px;width:141px;height:26px;background:#fbfbfb;border:1px solid #c9c9c9;border-radius:4px;box-sizing:border-box;"></div>
<div class="t" style="left:1001px;top:353.57px;font-size:13.5px;line-height:13.5px;color:#000;">Estra<u>z</u>ione completa</div>
<div style="left:991px;top:381px;width:141px;height:26px;background:#fbfbfb;border:1px solid #c9c9c9;border-radius:4px;box-sizing:border-box;"></div>
<div class="t" style="left:1005px;top:388.57px;font-size:13.5px;line-height:13.5px;color:#000;">Estrazione <u>m</u>ultipla</div>
<div class="t" style="left:589px;top:386.57px;font-size:13.5px;line-height:13.5px;color:#000;">del</div>
<div style="left:627px;top:380px;width:88px;height:25px;background:#fff;border:1px solid #6f6f6f;border-radius:4px;box-sizing:border-box;"></div>
<div class="t" style="left:721px;top:386.57px;font-size:13.5px;line-height:13.5px;color:#000;">Priorità:</div>
<div style="left:785px;top:380px;width:64px;height:25px;background:#fff;border:1px solid #6f6f6f;border-radius:4px;box-sizing:border-box;"></div>
<div style="left:475px;top:424px;width:668px;height:205px;background:#fff;border:1px solid #e3e3e3;box-sizing:border-box"></div>
<div style="left:481px;top:419px;width:72px;height:10px;background:#fff"></div>
<div class="t" style="left:484px;top:418.57px;font-size:13.5px;line-height:13.5px;color:#000;">Riga ordine</div>
<div style="left:846px;top:430px;width:1px;height:188px;background:#7a7a7a"></div>
<div class="t" style="left:483px;top:450.57px;font-size:13.5px;line-height:13.5px;color:#000;">Ri<u>g</u>a:</div>
<div style="left:549px;top:443px;width:64px;height:24px;background:#fff;border:1px solid #e6e6e6;border-radius:2px;box-sizing:border-box;"></div>
<div class="t" style="left:auto;right:1308px;top:448.57px;font-size:13.5px;line-height:13.5px;color:#6d6d6d;">0</div>
<div style="left:616px;top:443px;width:16px;height:24px;background:#e9e9e9"></div>
<svg style="position:absolute;left:616px;top:443px" width="16" height="24" viewBox="0 0 16 24"><path d="M4.5 8.5L8 5L11.5 8.5Z" fill="#666"/><path d="M4.5 15.5L8 19L11.5 15.5Z" fill="#666"/><path d="M1 12H15" stroke="#fff"/></svg>
<div style="left:640px;top:444px;width:26px;height:24px;background:#fbfbfb;border:1px solid #c9c9c9;border-radius:4px;box-sizing:border-box;border-color:#e8e8e8;background:#fcfcfc"></div>
<div class="t" style="left:645px;top:450.57px;font-size:13.5px;line-height:13.5px;color:#9a9a9a;"><span style="letter-spacing:1px">.</span><span style="letter-spacing:1px">.</span><span style="letter-spacing:1px">.</span></div>
<div style="left:685px;top:446px;width:16px;height:16px;background:#fff;border:1px solid #bdbdbd;border-radius:3px;box-sizing:border-box;"></div>
<div class="t" style="left:704px;top:448.57px;font-size:13.5px;line-height:13.5px;color:#8a8a8a;">A saldo</div>
<div class="t" style="left:483px;top:481.57px;font-size:13.5px;line-height:13.5px;color:#000;">Articolo:</div>
<div style="left:548px;top:476px;width:294px;height:25px;background:#fff;border:1px solid #6f6f6f;border-radius:4px;box-sizing:border-box;"></div>
<div class="t" style="left:483px;top:511.57px;font-size:13.5px;line-height:13.5px;color:#000;">Data consegna:</div>
<div style="left:616px;top:506px;width:99px;height:25px;background:#fff;border:1px solid #6f6f6f;border-radius:4px;box-sizing:border-box;"></div>
<div class="t" style="left:483px;top:543.57px;font-size:13.5px;line-height:13.5px;color:#000;">Prezzo:</div>
<div style="left:616px;top:537px;width:141px;height:25px;background:#fff;border:1px solid #6f6f6f;border-radius:4px;box-sizing:border-box;"></div>
<div class="t" style="left:483px;top:573.57px;font-size:13.5px;line-height:13.5px;color:#000;">Q<span style="letter-spacing:1px">.</span>tà da conse<u>g</u>nare:</div>
<div style="left:616px;top:568px;width:185px;height:24px;background:#fff;border:1px solid #e6e6e6;border-radius:2px;box-sizing:border-box;"></div>
<div class="t" style="left:auto;right:1122px;top:573.57px;font-size:13.5px;line-height:13.5px;color:#7a7a7a;">0,00</div>
<div class="t" style="left:483px;top:604.57px;font-size:13.5px;line-height:13.5px;color:#000;"><u>Q</u><span style="letter-spacing:1px">.</span>tà da cancellare:</div>
<div style="left:616px;top:599px;width:185px;height:24px;background:#fff;border:1px solid #e6e6e6;border-radius:2px;box-sizing:border-box;"></div>
<div class="t" style="left:auto;right:1122px;top:604.57px;font-size:13.5px;line-height:13.5px;color:#7a7a7a;">0,00</div>
<div class="t" style="left:854px;top:443.57px;font-size:13.5px;line-height:13.5px;color:#000;">Q<span style="letter-spacing:1px">.</span>tà ordinata:</div>
<div style="left:966px;top:437px;width:167px;height:25px;background:#fff;border:1px solid #6f6f6f;border-radius:4px;box-sizing:border-box;"></div>
<div class="t" style="left:854px;top:473.57px;font-size:13.5px;line-height:13.5px;color:#000;">Q<span style="letter-spacing:1px">.</span>tà consegnata:</div>
<div style="left:966px;top:467px;width:167px;height:25px;background:#fff;border:1px solid #6f6f6f;border-radius:4px;box-sizing:border-box;"></div>
<div class="t" style="left:857px;top:504.57px;font-size:13.5px;line-height:13.5px;color:#000;">Q<span style="letter-spacing:1px">.</span>tà cancellata:</div>
<div style="left:966px;top:498px;width:167px;height:25px;background:#fff;border:1px solid #6f6f6f;border-radius:4px;box-sizing:border-box;"></div>
<div class="t" style="left:854px;top:563.57px;font-size:13.5px;line-height:13.5px;color:#000;">Q<span style="letter-spacing:1px">.</span>tà estratta:</div>
<div style="left:966px;top:557px;width:167px;height:25px;background:#fff;border:1px solid #6f6f6f;border-radius:4px;box-sizing:border-box;"></div>
<div class="t" style="left:854px;top:593.57px;font-size:13.5px;line-height:13.5px;color:#000;">Q<span style="letter-spacing:1px">.</span>tà residua:</div>
<div style="left:966px;top:587px;width:167px;height:25px;background:#fff;border:1px solid #6f6f6f;border-radius:4px;box-sizing:border-box;"></div>
<div style="left:966px;top:541px;width:169px;height:1px;background:#a0a0a0"></div>
<div style="left:644px;top:638px;width:1006px;height:311px;background:#fff;border:1px solid #1a73c9;box-sizing:border-box"></div>
<div style="left:644px;top:638px;width:1006px;height:38px;background:#0067b8;border-top:1px solid #1b2530;border-right:1px solid #1b2530;box-sizing:border-box"></div>
<svg style="position:absolute;left:653.4px;top:648.6px" width="24" height="20" viewBox="0 0 24 20"><path d="M14.6 2.6 A7.1 7.1 0 1 0 17.4 8.7 L11.2 8.7" fill="none" stroke="#d3d8de" stroke-width="1.8"/><path d="M8.5 0.6H12" stroke="#d5dbe2" stroke-width="1"/><rect x="19.6" y="4.3" width="3" height="11.5" fill="#f5c400"/><path d="M18.6 4.8L20.5 4.3V6.6Z" fill="#f5c400"/></svg>
<div class="t" style="left:683px;top:650.46px;font-size:16px;line-height:16px;color:#fff;">Ordini Clienti</div>
<div style="left:1537px;top:660px;width:10px;height:3px;background:#fff"></div>
<div style="left:1570px;top:653px;width:12px;height:9px;border:1.5px solid #fff;border-top-width:3px;box-sizing:border-box"></div>
<svg style="position:absolute;left:1606px;top:648px" width="22" height="18" viewBox="0 0 22 18"><path d="M6 4L16 14M16 4L6 14" stroke="#fff" stroke-width="2.6"/></svg>
<div style="left:653px;top:677px;width:966px;height:263px;border-left:1px solid #dcdcdc;border-bottom:1px solid #dcdcdc;box-sizing:border-box"></div>
<svg style="position:absolute;left:0;top:0" width="1660" height="730"><path d="M661 682.5V717.5" stroke="#8a8a8a" stroke-width="1.2"/><path d="M832 682.5V717.5" stroke="#8a8a8a" stroke-width="1.2"/><path d="M923.5 682.5V717.5" stroke="#8a8a8a" stroke-width="1.2"/><path d="M1014.5 682.5V717.5" stroke="#8a8a8a" stroke-width="1.2"/><path d="M1106 682.5V717.5" stroke="#8a8a8a" stroke-width="1.2"/><path d="M1157 682.5V717.5" stroke="#8a8a8a" stroke-width="1.2"/><path d="M1288 682.5V717.5" stroke="#8a8a8a" stroke-width="1.2"/><path d="M1339.5 682.5V717.5" stroke="#8a8a8a" stroke-width="1.2"/><rect x="676.5" y="687" width="6" height="24.5" fill="#4a7fb8"/><path d="M696.5 689.5L685.5 699L696.5 708.5" fill="none" stroke="#4a7fb8" stroke-width="5.2"/><path d="M732.5 689.5L722.5 699L732.5 708.5" fill="none" stroke="#4a7fb8" stroke-width="5.2"/><path d="M762.5 689.5L772.5 699L762.5 708.5" fill="none" stroke="#4a7fb8" stroke-width="5.2"/><path d="M798.5 689.5L808 699L798.5 708.5" fill="none" stroke="#4a7fb8" stroke-width="5.2"/><rect x="813" y="687" width="6" height="24.5" fill="#4a7fb8"/><rect x="847" y="695" width="18" height="15.5" rx="1" fill="none" stroke="#6f6f6f" stroke-width="1.8"/><path d="M847.5 699L855 706L871.5 689.5" fill="none" stroke="#6fa58c" stroke-width="4"/><rect x="887" y="695" width="18" height="15.5" rx="1" fill="none" stroke="#6f6f6f" stroke-width="1.8"/><path d="M887.5 699L895 706L911.5 689.5" fill="none" stroke="#6fa58c" stroke-width="4"/><rect x="900" y="700" width="12.5" height="12" fill="#ef9a4a"/><rect x="903" y="700" width="6" height="4" fill="#fff"/><rect x="904" y="708" width="4" height="4" fill="#fff"/><path d="M940 690H947L949 693H951L953 690H960L964 703H936Z" fill="#6f6f6f"/><circle cx="943" cy="702" r="6.5" fill="#6f6f6f"/><circle cx="957" cy="702" r="6.5" fill="#6f6f6f"/><circle cx="943" cy="702" r="3.6" fill="#3f7fcf" stroke="#d0e2f5" stroke-width="1"/><circle cx="957" cy="702" r="3.6" fill="#3f7fcf" stroke="#d0e2f5" stroke-width="1"/><path d="M981 697H998L1003 707H977Z" fill="#6f6f6f"/><circle cx="984" cy="705" r="6.5" fill="#6f6f6f"/><circle cx="996" cy="705" r="6.5" fill="#6f6f6f"/><circle cx="984" cy="705" r="3.4" fill="#d8d8d8"/><circle cx="996" cy="705" r="3.4" fill="#d8d8d8"/><path d="M983 695Q984 689 993 690" fill="none" stroke="#4a7fb8" stroke-width="2.6"/><path d="M992 685L1002 690.5L992 696Z" fill="#4a7fb8"/><rect x="1031.5" y="688" width="22" height="22" fill="none" stroke="#6f6f6f" stroke-width="1.3"/><rect x="1031" y="688" width="8" height="22" fill="#ef9a4a"/><path d="M1039 694.5H1054M1039 700.5H1054M1039 705H1054M1028 688H1056M1028 710H1056M1031.5 685.5V712.5M1053.5 685.5V712.5" stroke="#6f6f6f" stroke-width="1.3"/><path d="M1071 688.5H1093V704L1087.5 709.5H1071Z" fill="none" stroke="#ef9a4a" stroke-width="2"/><path d="M1087.5 709.5V704H1093" fill="none" stroke="#ef9a4a" stroke-width="1.5"/><path d="M1070 687L1075 692" stroke="#4a7fb8" stroke-width="1.4"/><circle cx="1071" cy="687.5" r="3" fill="#4a7fb8"/><path d="M1127 711V692" stroke="#6f6f6f" stroke-width="3.2"/><path d="M1120 698L1127 687L1134 698Z" fill="#6f6f6f"/><text x="1136" y="697" font-size="10" font-weight="bold" fill="#4a7fb8" font-family="Liberation Sans">A</text><text x="1136.5" y="709" font-size="10" font-weight="bold" fill="#4a7fb8" font-family="Liberation Sans">Z</text><g fill="none" stroke="#c8c8c8" stroke-width="2.4"><rect x="1182" y="686" width="9" height="15" rx="4.5" transform="rotate(45 1186.5 693.5)"/><rect x="1175" y="696" width="9" height="15" rx="4.5" transform="rotate(45 1179.5 703.5)"/></g><rect x="1213" y="688.5" width="21.5" height="21.5" fill="none" stroke="#6f6f6f" stroke-width="1.6" stroke-dasharray="2.5 1.5"/><rect x="1253" y="688.5" width="21.5" height="21.5" fill="none" stroke="#6f6f6f" stroke-width="1.6" stroke-dasharray="2.5 1.5"/><path d="M1258.5 694L1269 704.5M1269 694L1258.5 704.5" stroke="#e87f92" stroke-width="3"/><rect x="1308.5" y="686.5" width="13" height="9" fill="#fff" stroke="#6f6f6f" stroke-width="1.5"/><path d="M1311 690H1319M1311 692.5H1319" stroke="#5b93d3" stroke-width="1.4"/><rect x="1302" y="696" width="26" height="13" rx="3" fill="#6f6f6f"/><rect x="1306" y="703.5" width="18" height="4" rx="1" fill="#fff"/><rect x="1347.5" y="686.5" width="179" height="25.5" rx="3" fill="#fdfdfd" stroke="#d4d4d4"/><rect x="1350.5" y="689.5" width="19" height="19" rx="1" fill="#e6f2e6" stroke="#217346" stroke-width="1.4"/><path d="M1354 693L1365 705M1365 693L1354 705" stroke="#1e7a3e" stroke-width="3"/><path d="M1511 697L1516 702L1521 697" fill="none" stroke="#555" stroke-width="1.3"/><path d="M1539 690H1545L1542.5 697H1546L1538.5 708L1540 700H1536.5Z" fill="#ef9a4a"/></svg>
<div class="t" style="left:1374px;top:693.57px;font-size:13.5px;line-height:13.5px;color:#000;">Excel</div>
<div style="left:654px;top:723px;width:942px;height:151px;background:#fff"></div>
<div style="left:654px;top:723px;width:965px;height:1px;background:#e6e6e6"></div>
<svg style="position:absolute;left:0px;top:0px" width="1650" height="900" viewBox="0 0 1650 900"><path d="M686.5 726V752" stroke="#e3e3e3"/><path d="M686.5 752V874" stroke="#efe9d4"/><path d="M724.5 726V752" stroke="#e3e3e3"/><path d="M724.5 752V874" stroke="#efe9d4"/><path d="M777.5 726V752" stroke="#e3e3e3"/><path d="M777.5 752V874" stroke="#efe9d4"/><path d="M933.5 726V752" stroke="#e3e3e3"/><path d="M933.5 752V874" stroke="#efe9d4"/><path d="M1009.5 726V752" stroke="#e3e3e3"/><path d="M1009.5 752V874" stroke="#efe9d4"/><path d="M1036.5 726V752" stroke="#e3e3e3"/><path d="M1036.5 752V874" stroke="#efe9d4"/><path d="M1085.5 726V752" stroke="#e3e3e3"/><path d="M1085.5 752V874" stroke="#efe9d4"/><path d="M1152.5 726V752" stroke="#e3e3e3"/><path d="M1152.5 752V874" stroke="#efe9d4"/><path d="M1458.5 726V752" stroke="#e3e3e3"/><path d="M1458.5 752V874" stroke="#efe9d4"/><path d="M1525.5 726V752" stroke="#e3e3e3"/><path d="M1525.5 752V874" stroke="#efe9d4"/><path d="M1590.5 726V752" stroke="#e3e3e3"/><path d="M1590.5 752V874" stroke="#efe9d4"/><path d="M655 774.5H1595" stroke="#efe9d4"/><path d="M655 797.5H1595" stroke="#efe9d4"/><path d="M655 819.5H1595" stroke="#efe9d4"/><path d="M655 842.5H1595" stroke="#efe9d4"/><path d="M655 864.5H1595" stroke="#efe9d4"/></svg>
<div class="t" style="left:658px;top:732.57px;font-size:13.5px;line-height:13.5px;color:#000;">Tipo</div>
<div class="t" style="left:690px;top:732.57px;font-size:13.5px;line-height:13.5px;color:#000;">Anno</div>
<div class="t" style="left:727px;top:732.57px;font-size:13.5px;line-height:13.5px;color:#000;">Numero</div>
<div class="t" style="left:779px;top:732.57px;font-size:13.5px;line-height:13.5px;color:#000;">Ord<span style="letter-spacing:1px">.</span>Elet<span style="letter-spacing:1px">.</span> NSO</div>
<div class="t" style="left:935px;top:732.57px;font-size:13.5px;line-height:13.5px;color:#000;">Data ordine</div>
<div class="t" style="left:1012px;top:732.57px;font-size:13.5px;line-height:13.5px;color:#000;">C/P</div>
<div class="t" style="left:1039px;top:732.57px;font-size:13.5px;line-height:13.5px;color:#000;">Priorità</div>
<div class="t" style="left:1088px;top:732.57px;font-size:13.5px;line-height:13.5px;color:#000;">Cliente</div>
<div class="t" style="left:1154px;top:732.57px;font-size:13.5px;line-height:13.5px;color:#000;">Ragione sociale</div>
<div class="t" style="left:1460px;top:732.57px;font-size:13.5px;line-height:13.5px;color:#000;">Ragg<span style="letter-spacing:1px">.</span>ord<span style="letter-spacing:1px">.</span></div>
<div class="t" style="left:1528px;top:732.57px;font-size:13.5px;line-height:13.5px;color:#000;">Cod<span style="letter-spacing:1px">.</span>mag<span style="letter-spacing:1px">.</span></div>
<svg style="position:absolute;left:763px;top:724px" width="12" height="8" viewBox="0 0 12 8"><path d="M1 1.5H10L5.5 6Z" fill="#7a7a7a"/></svg>
<div style="left:655px;top:753px;width:940px;height:21px;background:#0078d7"></div>
<svg style="position:absolute;left:0px;top:0px" width="1650" height="800" viewBox="0 0 1650 800"><path d="M686.5 753V774" stroke="#fff" stroke-opacity=".55"/><path d="M724.5 753V774" stroke="#fff" stroke-opacity=".55"/><path d="M777.5 753V774" stroke="#fff" stroke-opacity=".55"/><path d="M933.5 753V774" stroke="#fff" stroke-opacity=".55"/><path d="M1009.5 753V774" stroke="#fff" stroke-opacity=".55"/><path d="M1036.5 753V774" stroke="#fff" stroke-opacity=".55"/><path d="M1085.5 753V774" stroke="#fff" stroke-opacity=".55"/><path d="M1152.5 753V774" stroke="#fff" stroke-opacity=".55"/><path d="M1458.5 753V774" stroke="#fff" stroke-opacity=".55"/><path d="M1525.5 753V774" stroke="#fff" stroke-opacity=".55"/><path d="M1590.5 753V774" stroke="#fff" stroke-opacity=".55"/></svg>
<div class="t" style="left:658px;top:757.57px;font-size:13.5px;line-height:13.5px;color:#fff;">C1</div>
<div class="t" style="left:690px;top:757.57px;font-size:13.5px;line-height:13.5px;color:#fff;">2023</div>
<div class="t" style="left:auto;right:1145px;top:757.57px;font-size:13.5px;line-height:13.5px;color:#fff;">1</div>
<div class="t" style="left:779px;top:757.57px;font-size:13.5px;line-height:13.5px;color:#fff;">No</div>
<div class="t" style="left:935px;top:757.57px;font-size:13.5px;line-height:13.5px;color:#fff;">01/08/23</div>
<div class="t" style="left:1012px;top:757.57px;font-size:13.5px;line-height:13.5px;color:#fff;">C</div>
<div class="t" style="left:1040px;top:757.57px;font-size:13.5px;line-height:13.5px;color:#fff;">5</div>
<div class="t" style="left:1088px;top:757.57px;font-size:13.5px;line-height:13.5px;color:#fff;">22000</div>
<div class="t" style="left:1154px;top:757.57px;font-size:13.5px;line-height:13.5px;color:#fff;">Esposito Carlo Industrie s<span style="letter-spacing:1px">.</span>p<span style="letter-spacing:1px">.</span>a</div>
<div class="t" style="left:1461px;top:757.57px;font-size:13.5px;line-height:13.5px;color:#fff;">A</div>
<div class="t" style="left:1528px;top:757.57px;font-size:13.5px;line-height:13.5px;color:#fff;">01</div>
<div class="t" style="left:658px;top:780.57px;font-size:13.5px;line-height:13.5px;color:#000;">C1</div>
<div class="t" style="left:690px;top:780.57px;font-size:13.5px;line-height:13.5px;color:#000;">2023</div>
<div class="t" style="left:auto;right:1145px;top:780.57px;font-size:13.5px;line-height:13.5px;color:#000;">2</div>
<div class="t" style="left:779px;top:780.57px;font-size:13.5px;line-height:13.5px;color:#000;">No</div>
<div class="t" style="left:935px;top:780.57px;font-size:13.5px;line-height:13.5px;color:#000;">10/08/23</div>
<div class="t" style="left:1012px;top:780.57px;font-size:13.5px;line-height:13.5px;color:#000;">C</div>
<div class="t" style="left:1040px;top:780.57px;font-size:13.5px;line-height:13.5px;color:#000;">5</div>
<div class="t" style="left:1088px;top:780.57px;font-size:13.5px;line-height:13.5px;color:#000;">22000</div>
<div class="t" style="left:1154px;top:780.57px;font-size:13.5px;line-height:13.5px;color:#000;">Esposito Carlo Industrie s<span style="letter-spacing:1px">.</span>p<span style="letter-spacing:1px">.</span>a</div>
<div class="t" style="left:1461px;top:780.57px;font-size:13.5px;line-height:13.5px;color:#000;">A</div>
<div class="t" style="left:1528px;top:780.57px;font-size:13.5px;line-height:13.5px;color:#000;">01</div>
<div class="t" style="left:658px;top:802.57px;font-size:13.5px;line-height:13.5px;color:#000;">C1</div>
<div class="t" style="left:690px;top:802.57px;font-size:13.5px;line-height:13.5px;color:#000;">2023</div>
<div class="t" style="left:auto;right:1145px;top:802.57px;font-size:13.5px;line-height:13.5px;color:#000;">3</div>
<div class="t" style="left:779px;top:802.57px;font-size:13.5px;line-height:13.5px;color:#000;">No</div>
<div class="t" style="left:935px;top:802.57px;font-size:13.5px;line-height:13.5px;color:#000;">17/08/23</div>
<div class="t" style="left:1012px;top:802.57px;font-size:13.5px;line-height:13.5px;color:#000;">C</div>
<div class="t" style="left:1040px;top:802.57px;font-size:13.5px;line-height:13.5px;color:#000;">5</div>
<div class="t" style="left:1088px;top:802.57px;font-size:13.5px;line-height:13.5px;color:#000;">22000</div>
<div class="t" style="left:1154px;top:802.57px;font-size:13.5px;line-height:13.5px;color:#000;">Esposito Carlo Industrie s<span style="letter-spacing:1px">.</span>p<span style="letter-spacing:1px">.</span>a</div>
<div class="t" style="left:1461px;top:802.57px;font-size:13.5px;line-height:13.5px;color:#000;">A</div>
<div class="t" style="left:1528px;top:802.57px;font-size:13.5px;line-height:13.5px;color:#000;">01</div>
<div style="left:1596px;top:725px;width:23px;height:149px;background:#f0f0f0"></div>
<div style="left:1604px;top:789px;width:3px;height:22px;background:#8a8a8a"></div>
<div style="left:1592px;top:737px;width:2.5px;height:9px;background:#6e4a2c;border-radius:3px 0 0 3px"></div>
<div style="left:1592px;top:762px;width:3px;height:5px;background:#cfe3f7"></div>
<div style="left:1593px;top:787px;width:2px;height:2px;background:#d27a2a"></div>
<div style="left:1593px;top:810px;width:2px;height:2px;background:#d27a2a"></div>
<div style="left:655px;top:874px;width:964px;height:22px;background:#efefef"></div>
<div style="left:678px;top:884px;width:21px;height:3px;background:#8a8a8a"></div>
<div style="left:655px;top:896px;width:964px;height:1.5px;background:#8f8f8f"></div>
<div style="left:1619px;top:677px;width:22px;height:262px;background:#f0f0f0"></div>
<div style="left:1619px;top:698px;width:22px;height:211px;background:#cdcdcd"></div>
<svg style="position:absolute;left:1619px;top:680px" width="22" height="16" viewBox="0 0 22 16"><path d="M6 10L11 5L16 10" fill="none" stroke="#7a7a7a" stroke-width="2"/></svg>
<svg style="position:absolute;left:1619px;top:920px" width="22" height="16" viewBox="0 0 22 16"><path d="M6 5L11 10L16 5" fill="none" stroke="#7a7a7a" stroke-width="2"/></svg>
<div style="left:1641px;top:677px;width:7px;height:271px;background:#f8f8f8"></div>
<div style="left:686px;top:906px;width:144px;height:25px;background:#fff;border:1px solid #bdbdbd;border-radius:0px;box-sizing:border-box;"></div>
<div class="t" style="left:879px;top:912.57px;font-size:13.5px;line-height:13.5px;color:#000;"><u>S</u>eleziona filtro:</div>
<div style="left:991px;top:906px;width:272px;height:29px;background:#fff;border:1px solid #cfcfcf;border-radius:3px;box-sizing:border-box;"></div>
<svg style="position:absolute;left:1244px;top:914px" width="14" height="14" viewBox="0 0 14 14"><path d="M2 4.5L7 9.5L12 4.5" fill="none" stroke="#444" stroke-width="1.2"/></svg>
<svg style="position:absolute;left:1266px;top:910px" width="22" height="22" viewBox="0 0 22 22"><path d="M2 3H20L13 11V19L9 17V11Z" fill="#3b78c0"/><ellipse cx="11" cy="4" rx="9" ry="2" fill="#5a9ad8"/></svg>
<svg style="position:absolute;left:836px;top:906px" width="24" height="24" viewBox="0 0 24 24"><path d="M6 11H17L19.5 18H3.5Z" fill="#7a7a7a"/><circle cx="7.3" cy="17" r="4.4" fill="#7a7a7a"/><circle cx="15.7" cy="17" r="4.4" fill="#7a7a7a"/><circle cx="7.3" cy="17" r="2.5" fill="#d4d4d4"/><circle cx="15.7" cy="17" r="2.5" fill="#d4d4d4"/><path d="M6.5 9.5Q7 6.5 13 6.5" fill="none" stroke="#3f7fc0" stroke-width="2.2"/><path d="M12.5 4L18 6.8L12.5 9.8Z" fill="#3f7fc0"/></svg>
</body></html>
